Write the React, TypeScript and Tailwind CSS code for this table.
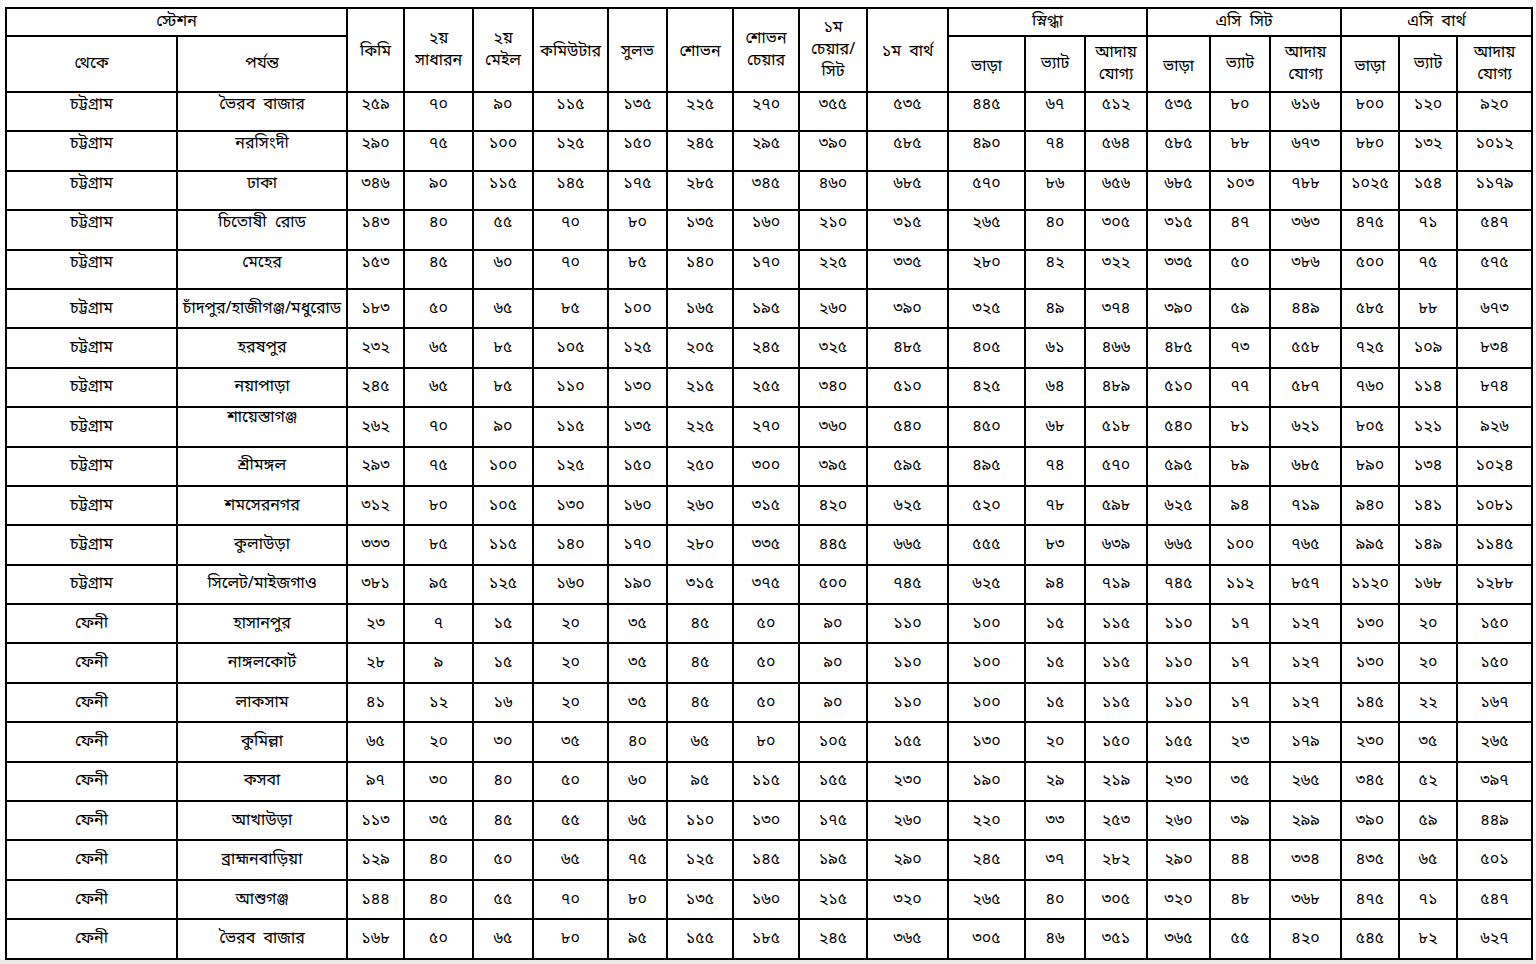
import React from "react";

const colWidths = [
  "w-[171px]", "w-[170px]", "w-[57px]", "w-[69px]", "w-[60px]", "w-[75px]", "w-[59px]",
  "w-[66px]", "w-[66px]", "w-[68px]", "w-[81px]", "w-[77px]", "w-[60px]", "w-[62px]",
  "w-[63px]", "w-[60px]", "w-[71px]", "w-[58px]", "w-[58px]", "w-[75px]",
];

// থেকে, পর্যন্ত, কিমি, ২য় সাধারন ... এসি বার্থ আদায় যোগ্য
const rows: string[][] = [
  ["চট্টগ্রাম", "ভৈরব\u00a0 বাজার", "২৫৯", "৭০", "৯০", "১১৫", "১৩৫", "২২৫", "২৭০", "৩৫৫", "৫৩৫", "৪৪৫", "৬৭", "৫১২", "৫৩৫", "৮০", "৬১৬", "৮০০", "১২০", "৯২০"],
  ["চট্টগ্রাম", "নরসিংদী", "২৯০", "৭৫", "১০০", "১২৫", "১৫০", "২৪৫", "২৯৫", "৩৯০", "৫৮৫", "৪৯০", "৭৪", "৫৬৪", "৫৮৫", "৮৮", "৬৭৩", "৮৮০", "১৩২", "১০১২"],
  ["চট্টগ্রাম", "ঢাকা", "৩৪৬", "৯০", "১১৫", "১৪৫", "১৭৫", "২৮৫", "৩৪৫", "৪৬০", "৬৮৫", "৫৭০", "৮৬", "৬৫৬", "৬৮৫", "১০৩", "৭৮৮", "১০২৫", "১৫৪", "১১৭৯"],
  ["চট্টগ্রাম", "চিতোষী\u00a0 রোড", "১৪৩", "৪০", "৫৫", "৭০", "৮০", "১৩৫", "১৬০", "২১০", "৩১৫", "২৬৫", "৪০", "৩০৫", "৩১৫", "৪৭", "৩৬৩", "৪৭৫", "৭১", "৫৪৭"],
  ["চট্টগ্রাম", "মেহের", "১৫৩", "৪৫", "৬০", "৭০", "৮৫", "১৪০", "১৭০", "২২৫", "৩৩৫", "২৮০", "৪২", "৩২২", "৩৩৫", "৫০", "৩৮৬", "৫০০", "৭৫", "৫৭৫"],
  ["চট্টগ্রাম", "চাঁদপুর/হাজীগঞ্জ/মধুরোড", "১৮৩", "৫০", "৬৫", "৮৫", "১০০", "১৬৫", "১৯৫", "২৬০", "৩৯০", "৩২৫", "৪৯", "৩৭৪", "৩৯০", "৫৯", "৪৪৯", "৫৮৫", "৮৮", "৬৭৩"],
  ["চট্টগ্রাম", "হরষপুর", "২৩২", "৬৫", "৮৫", "১০৫", "১২৫", "২০৫", "২৪৫", "৩২৫", "৪৮৫", "৪০৫", "৬১", "৪৬৬", "৪৮৫", "৭৩", "৫৫৮", "৭২৫", "১০৯", "৮৩৪"],
  ["চট্টগ্রাম", "নয়াপাড়া", "২৪৫", "৬৫", "৮৫", "১১০", "১৩০", "২১৫", "২৫৫", "৩৪০", "৫১০", "৪২৫", "৬৪", "৪৮৯", "৫১০", "৭৭", "৫৮৭", "৭৬০", "১১৪", "৮৭৪"],
  ["চট্টগ্রাম", "শায়েস্তাগঞ্জ", "২৬২", "৭০", "৯০", "১১৫", "১৩৫", "২২৫", "২৭০", "৩৬০", "৫৪০", "৪৫০", "৬৮", "৫১৮", "৫৪০", "৮১", "৬২১", "৮০৫", "১২১", "৯২৬"],
  ["চট্টগ্রাম", "শ্রীমঙ্গল", "২৯৩", "৭৫", "১০০", "১২৫", "১৫০", "২৫০", "৩০০", "৩৯৫", "৫৯৫", "৪৯৫", "৭৪", "৫৭০", "৫৯৫", "৮৯", "৬৮৫", "৮৯০", "১৩৪", "১০২৪"],
  ["চট্টগ্রাম", "শমসেরনগর", "৩১২", "৮০", "১০৫", "১৩০", "১৬০", "২৬০", "৩১৫", "৪২০", "৬২৫", "৫২০", "৭৮", "৫৯৮", "৬২৫", "৯৪", "৭১৯", "৯৪০", "১৪১", "১০৮১"],
  ["চট্টগ্রাম", "কুলাউড়া", "৩৩৩", "৮৫", "১১৫", "১৪০", "১৭০", "২৮০", "৩৩৫", "৪৪৫", "৬৬৫", "৫৫৫", "৮৩", "৬৩৯", "৬৬৫", "১০০", "৭৬৫", "৯৯৫", "১৪৯", "১১৪৫"],
  ["চট্টগ্রাম", "সিলেট/মাইজগাও", "৩৮১", "৯৫", "১২৫", "১৬০", "১৯০", "৩১৫", "৩৭৫", "৫০০", "৭৪৫", "৬২৫", "৯৪", "৭১৯", "৭৪৫", "১১২", "৮৫৭", "১১২০", "১৬৮", "১২৮৮"],
  ["ফেনী", "হাসানপুর", "২৩", "৭", "১৫", "২০", "৩৫", "৪৫", "৫০", "৯০", "১১০", "১০০", "১৫", "১১৫", "১১০", "১৭", "১২৭", "১৩০", "২০", "১৫০"],
  ["ফেনী", "নাঙ্গলকোর্ট", "২৮", "৯", "১৫", "২০", "৩৫", "৪৫", "৫০", "৯০", "১১০", "১০০", "১৫", "১১৫", "১১০", "১৭", "১২৭", "১৩০", "২০", "১৫০"],
  ["ফেনী", "লাকসাম", "৪১", "১২", "১৬", "২০", "৩৫", "৪৫", "৫০", "৯০", "১১০", "১০০", "১৫", "১১৫", "১১০", "১৭", "১২৭", "১৪৫", "২২", "১৬৭"],
  ["ফেনী", "কুমিল্লা", "৬৫", "২০", "৩০", "৩৫", "৪০", "৬৫", "৮০", "১০৫", "১৫৫", "১৩০", "২০", "১৫০", "১৫৫", "২৩", "১৭৯", "২৩০", "৩৫", "২৬৫"],
  ["ফেনী", "কসবা", "৯৭", "৩০", "৪০", "৫০", "৬০", "৯৫", "১১৫", "১৫৫", "২৩০", "১৯০", "২৯", "২১৯", "২৩০", "৩৫", "২৬৫", "৩৪৫", "৫২", "৩৯৭"],
  ["ফেনী", "আখাউড়া", "১১৩", "৩৫", "৪৫", "৫৫", "৬৫", "১১০", "১৩০", "১৭৫", "২৬০", "২২০", "৩৩", "২৫৩", "২৬০", "৩৯", "২৯৯", "৩৯০", "৫৯", "৪৪৯"],
  ["ফেনী", "ব্রাহ্মনবাড়িয়া", "১২৯", "৪০", "৫০", "৬৫", "৭৫", "১২৫", "১৪৫", "১৯৫", "২৯০", "২৪৫", "৩৭", "২৮২", "২৯০", "৪৪", "৩৩৪", "৪৩৫", "৬৫", "৫০১"],
  ["ফেনী", "আশুগঞ্জ", "১৪৪", "৪০", "৫৫", "৭০", "৮০", "১৩৫", "১৬০", "২১৫", "৩২০", "২৬৫", "৪০", "৩০৫", "৩২০", "৪৮", "৩৬৮", "৪৭৫", "৭১", "৫৪৭"],
  ["ফেনী", "ভৈরব\u00a0 বাজার", "১৬৮", "৫০", "৬৫", "৮০", "৯৫", "১৫৫", "১৮৫", "২৪৫", "৩৬৫", "৩০৫", "৪৬", "৩৫১", "৩৬৫", "৫৫", "৪২০", "৫৪৫", "৮২", "৬২৭"],
];

const th = "border-2 border-black text-center align-middle font-normal leading-[22px] px-0";
const td = "border-2 border-black text-center px-0 leading-5";

export default function App() {
  return (
    <div
      className="w-[1536px] h-[964px] bg-white flex flex-col text-black text-[16px]"
      style={{ fontFamily: '"Noto Sans Bengali", "Noto Serif Bengali", "Lohit Bengali", "Vrinda", "FreeSans", "Noto Sans", sans-serif' }}
    >
      <div className="pt-[7px] pl-[5px]">
        <table className="table-fixed border-collapse w-[1526px] border-2 border-black">
          <colgroup>
            {colWidths.map((w, i) => (
              <col key={i} className={w} />
            ))}
          </colgroup>
          <thead>
            <tr className="h-[28px]">
              <th colSpan={2} className={th}>স্টেশন</th>
              <th rowSpan={2} className={`${th} pt-[4px]`}>কিমি</th>
              <th rowSpan={2} className={th}>২য়<br />সাধারন</th>
              <th rowSpan={2} className={th}>২য়<br />মেইল</th>
              <th rowSpan={2} className={`${th} pt-[4px]`}>কমিউটার</th>
              <th rowSpan={2} className={`${th} pt-[4px]`}>সুলভ</th>
              <th rowSpan={2} className={`${th} pt-[4px]`}>শোভন</th>
              <th rowSpan={2} className={th}>শোভন<br />চেয়ার</th>
              <th rowSpan={2} className={th}>১ম<br />চেয়ার/<br />সিট</th>
              <th rowSpan={2} className={`${th} pt-[4px]`}>১ম&nbsp; বার্থ</th>
              <th colSpan={3} className={th}>স্নিগ্ধা</th>
              <th colSpan={3} className={th}>এসি&nbsp; সিট</th>
              <th colSpan={3} className={th}>এসি&nbsp; বার্থ</th>
            </tr>
            <tr className="h-[56px]">
              <th className={th}>থেকে</th>
              <th className={th}>পর্যন্ত</th>
              {[0, 1, 2].map((g) => (
                <React.Fragment key={g}>
                  <th className={`${th} pt-[6px]`}>ভাড়া</th>
                  <th className={th}>ভ্যাট</th>
                  <th className={th}>আদায়<br />যোগ্য</th>
                </React.Fragment>
              ))}
            </tr>
          </thead>
          <tbody>
            {rows.map((r, ri) => (
              <tr key={ri} className="h-[39.4px]">
                {r.map((c, ci) => {
                  // first five rows sit at the top of their cells, the rest are centred
                  let v = ri < 5 ? "align-top pt-[2px]" : "align-middle";
                  if (ri === 8 && ci === 1) v = "align-top pt-0";
                  return (
                    <td key={ci} className={`${td} ${v} ${ci === 1 ? "whitespace-nowrap" : ""}`}>
                      {c}
                    </td>
                  );
                })}
              </tr>
            ))}
          </tbody>
        </table>
      </div>
      <div className="mt-auto h-[6px] bg-[#e9e9e9]" />
    </div>
  );
}
